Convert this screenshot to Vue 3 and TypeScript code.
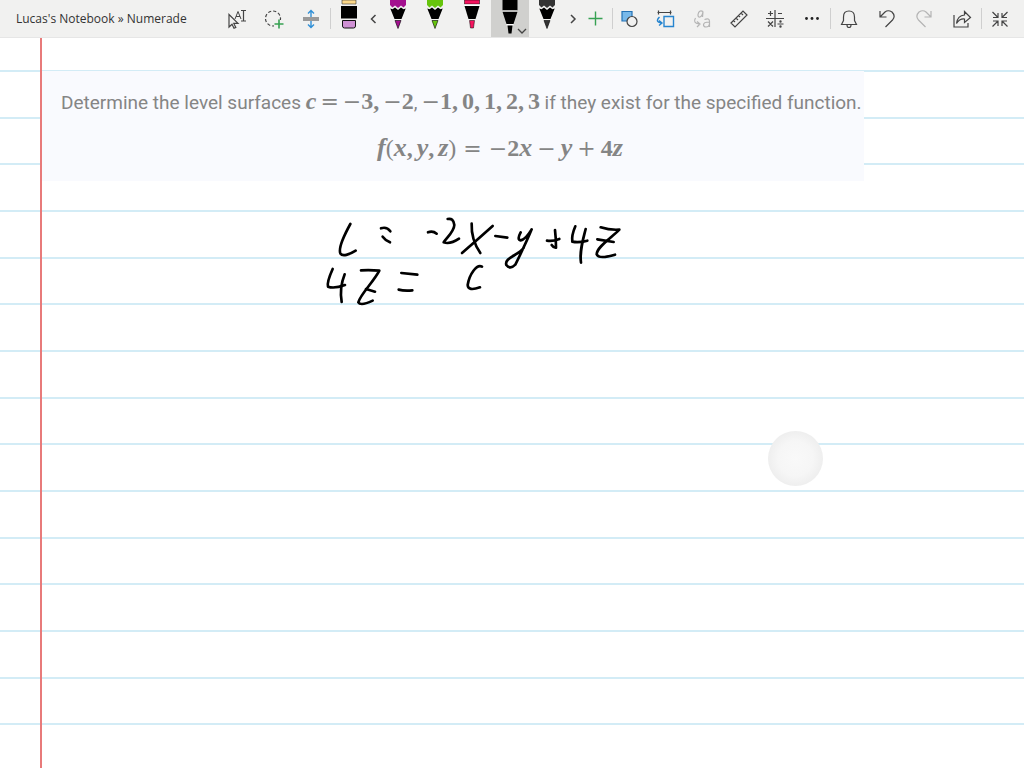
<script setup lang="ts">
interface Pen {
  name: string
  color: string
  kind: 'pencil' | 'marker'
  selected?: boolean
}

const pens: Pen[] = [
  { name: 'Purple pencil', color: '#a3108f', kind: 'pencil' },
  { name: 'Green pencil', color: '#66c40c', kind: 'pencil' },
  { name: 'Pink pen', color: '#f5145f', kind: 'marker' },
  { name: 'Black pen', color: '#000000', kind: 'marker', selected: true },
  { name: 'Dark pencil', color: '#333333', kind: 'pencil' },
]

const strokes: string[] = [
  'M121 57 C104 88 84 128 91 145 C97 156 118 149 137 137',
  'M213 70 Q230 64 241 79',
  'M218 95 Q226 106 240 112',
  'M354 82 Q368 76 380 86',
  'M413 42 Q430 38 433 60 C432 80 412 96 401 112 Q420 119 447 101',
  'M485 56 Q483 104 511 144',
  'M548 63 Q500 106 456 144',
  'M556 93 L592 98',
  'M632 82 Q620 104 632 106 Q646 104 665 73 Q650 110 616 179 Q600 195 589 180 C582 158 625 152 641 128',
  'M711 107 Q728 110 748 102',
  'M735 75 Q738 100 738 128 Q731 129 725 120',
  'M796 64 Q784 92 787 110 Q806 114 832 107',
  'M827 72 C818 108 808 140 813 173',
  'M872 67 Q900 76 928 74 C905 98 860 126 860 148 Q866 164 915 149',
  'M862 103 L911 111',
  'M516 185 C500 176 478 208 473 240 Q474 260 510 247',
  'M68 192 Q50 232 54 245 Q72 252 105 240',
  'M104 208 C92 238 90 262 95 291',
  'M153 196 Q180 194 208 197 C190 232 152 266 145 292 Q152 304 188 287',
  'M168 252 L195 260',
  'M274 204 L322 209',
  'M266 254 Q282 258 307 256',
]
</script>

<template>
  <div class="app">
    <header class="bar">
      <span class="title">Lucas's Notebook » Numerade</span>

      <div class="group edit">
        <button aria-label="Select and type">
          <svg class="icon" viewBox="0 0 20 20">
            <path d="M2 5.500V18l3-2.800 2 4 1.800-.8-2-4H11z" />
            <path d="M8 10l3-7.500 3 7.500M9 7.500h4" class="thin" />
            <path d="M14 1.500h5M14 12h5M16.500 1.500V12" />
          </svg>
        </button>
        <button aria-label="Lasso select">
          <svg class="icon" viewBox="0 0 20 20">
            <circle cx="9" cy="9.500" r="7.500" stroke-dasharray="3.200 2" stroke-dashoffset="1" pathLength="47" />
            <path d="M10 11h10v9H10z" fill="#f1f1f0" stroke="none" />
            <path d="M15 10.500v9M10.500 15h9" stroke="#36a152" stroke-width="1.600" />
          </svg>
        </button>
        <button aria-label="Insert space">
          <svg class="icon" viewBox="0 0 20 20">
            <path d="M2 9h16M2 11h16" stroke-width="1.200" />
            <path d="M10 8V1.500M7 4.500l3-3 3 3M10 12v6.500M7 15.500l3 3 3-3" stroke="#2f8fd6" stroke-width="1.400" />
          </svg>
        </button>
      </div>

      <div class="group draw">
        <button aria-label="Eraser">
          <svg class="pen" viewBox="0 0 20 37">
            <path d="M3 0h14v4H3z" fill="#fbd88a" stroke="#333" stroke-width=".6" />
            <path d="M2 6h16v12.500H2z" fill="#000" />
            <path d="M3.500 20.500h13V26q0 2-2 2h-9q-2 0-2-2z" fill="#cf91d4" stroke="#111" stroke-width="1" />
          </svg>
        </button>
        <button aria-label="Previous pens">
          <svg class="chev" viewBox="0 0 8 12"><path d="M6.500 2L2.500 6l4 4" /></svg>
        </button>
        <div class="pens">
          <button v-for="p in pens" :key="p.name" :aria-label="p.name" :class="{ selected: p.selected }">
            <svg v-if="p.kind === 'pencil'" class="pen" viewBox="0 0 20 37">
              <path d="M2 0h16v5l-2.500 2.500L13 5.500l-3 2.500-3-2.500-2.500 2L2 5z" :fill="p.color" />
              <path d="M2.300 8.500l2.200.8L7 7.500l3 2.500 3-2.500 2.500 1.800 2.200-.8-4.200 10.500h-7z" fill="#000" />
              <path d="M7 20.500h6l-3 8z" :fill="p.color" stroke="#000" stroke-width=".6" />
            </svg>
            <svg v-else-if="p.selected" class="pen" viewBox="0 0 20 37">
              <path d="M2.500 0h15v10.500h-15z" :fill="p.color" />
              <path d="M2.500 10.500h15v1.200h-15zM6.500 24h7v1.500h-7z" fill="#fff" />
              <path d="M2.500 11.700h15l-4 12.300h-7z" :fill="p.color" />
              <path d="M7.500 25.500h5l-1 8h-3z" :fill="p.color" />
            </svg>
            <svg v-else class="pen" viewBox="0 0 20 37">
              <path d="M2.500 0h15v4h-15z" :fill="p.color" stroke="#000" stroke-width=".5" />
              <path d="M2.500 4.500h15V6h-15z" fill="#fff" />
              <path d="M2.500 6h15l-4 13h-7z" fill="#000" />
              <path d="M7.500 20.500h5l-1 7.500h-3z" :fill="p.color" stroke="#000" stroke-width=".5" />
            </svg>
            <svg v-if="p.selected" class="more" viewBox="0 0 10 8"><path d="M1 2l4 4 4-4" /></svg>
          </button>
        </div>
        <button aria-label="Next pens">
          <svg class="chev" viewBox="0 0 8 12"><path d="M2 2l4 4-4 4" /></svg>
        </button>
        <button aria-label="Add pen">
          <svg class="icon" viewBox="0 0 20 20"><path d="M9.500 2.500v14M2.500 9.500h14" stroke="#36a152" stroke-width="1.400" /></svg>
        </button>
      </div>

      <div class="group tools">
        <button aria-label="Shapes">
          <svg class="icon" viewBox="0 0 20 20">
            <path d="M2 2.500h10v9.500H2z" fill="#78b9ea" stroke="#2472b5" />
            <circle cx="12" cy="12.500" r="5" fill="#f1f1f0" stroke="#444" />
          </svg>
        </button>
        <button aria-label="Ink to shape">
          <svg class="icon" viewBox="0 0 20 20">
            <path d="M1.500 3.500h14M2.500 1.500v4M14.500 1.500v4" />
            <path d="M8 7.500h9.500v10H8zM3.500 8q-5 5 2 6M3 16.500L6 14l-3-2.500" stroke="#2785cf" stroke-width="1.400" />
          </svg>
        </button>
        <button aria-label="Ink to text" disabled>
          <svg class="icon faded" viewBox="0 0 20 20">
            <path d="M10 2.500q-4-2-5 3-.2 3 2 2.500 2.500-1 3-5.500l-.5 5.500M2.500 9q-3 5 3.500 6M4 12.500l3 2.500-3 3" />
            <path d="M11.500 10.500q5-2 5 2V18M16.500 13q-6 0-6 2.800 0 2.200 2.500 2.200 3 0 3.500-3" />
          </svg>
        </button>
        <button aria-label="Ruler">
          <svg class="icon" viewBox="0 0 20 20">
            <path d="M2 14L14 2l4 4L6 18zM4.500 11.500l1.500 1.500M7 9l2 2M9.500 6.500L11 8M12 4l2 2" />
          </svg>
        </button>
        <button aria-label="Math">
          <svg class="icon" viewBox="0 0 20 20">
            <path d="M1 9.500h18M10 1v17M5.500 2v5M3 4.500h5M13 4.500h4M3 12.500l5 5M8 12.500l-5 5M12.500 15h6" />
            <circle cx="15.500" cy="12.500" r=".6" /><circle cx="15.500" cy="17.500" r=".6" />
          </svg>
        </button>
        <button aria-label="More options">
          <svg class="icon" viewBox="0 0 20 20">
            <g fill="#222" stroke="none"><circle cx="4.500" cy="9.500" r="1.400" /><circle cx="10" cy="9.500" r="1.400" /><circle cx="15.500" cy="9.500" r="1.400" /></g>
          </svg>
        </button>
      </div>

      <div class="group history">
        <button aria-label="Notifications">
          <svg class="icon" viewBox="0 0 20 20">
            <path d="M2.500 15.500l2-4V8q0-6 5.500-6t5.500 6v3.500l2 4zM8 16q0 2.500 2 2.500t2-2.500" />
          </svg>
        </button>
        <button aria-label="Undo">
          <svg class="icon" viewBox="0 0 20 20"><path d="M3 2v6h6.500M3 8l5-5q3-2.500 7 0 4 4 .5 8L8.500 18" /></svg>
        </button>
        <button aria-label="Redo" disabled>
          <svg class="icon faded" viewBox="0 0 20 20"><path d="M17 2v6h-6.500M17 8l-5-5Q9 .5 5 3q-4 4-.5 8l7 7" /></svg>
        </button>
        <button aria-label="Share">
          <svg class="icon" viewBox="0 0 20 20">
            <path d="M2 6v12h14v-4M4.500 14.500q1-8 8-8.500V2.500L18.500 8.500l-6 5V10q-5-.5-8 4.500z" />
          </svg>
        </button>
      </div>

      <div class="group full">
        <button aria-label="Exit full screen">
          <svg class="icon" viewBox="0 0 20 20">
            <path d="M2.500 3L8 8.500M8 4v4.500H3M17.500 3L12 8.500M12 4v4.500h5M2.500 17.500L8 12M3 12h5v5M17.500 17.500L12 12M17 12h-5v5" />
          </svg>
        </button>
      </div>
    </header>

    <main class="paper">
      <section class="problem">
        <p class="line">
          Determine the level surfaces
          <span class="math"><i>c</i><span class="op rel">=</span><span class="op">−</span>3<span class="comma">,</span><span class="op">−</span>2<span class="plain">,</span><span class="op">−</span>1<span class="comma">,</span>0<span class="comma">,</span>1<span class="comma">,</span>2<span class="comma">,</span>3</span>
          if they exist for the specified function.
        </p>
        <p class="line formula">
          <span class="math"><i>f</i><span class="paren">(</span><i>x</i><span class="comma">,</span><i>y</i><span class="comma">,</span><i>z</i><span class="paren">)</span><span class="op rel">=</span><span class="op">−</span>2<i>x</i><span class="op bin">−</span><i>y</i><span class="op bin">+</span>4<i>z</i></span>
        </p>
      </section>

      <svg class="ink" viewBox="0 0 960 330" role="img" aria-label="c = -2x - y + 4z, 4z = c">
        <path v-for="(d, i) in strokes" :key="i" :d="d" />
      </svg>
      <div class="spot"></div>
    </main>
  </div>
</template>

<style>
body {
  background: #fff;
}
</style>

<style scoped>
.app {
  display: flex;
  flex-direction: column;
  min-height: 100vh;
}
.bar {
  display: flex;
  box-sizing: border-box;
  height: 38px;
  padding-right: 5px;
  background: #f1f1f0;
  border-bottom: 1px solid #e6e6e6;
  position: relative;
}
.title {
  flex: 1;
  padding-left: 16px;
  font: 12px/38px "Open Sans", "Noto Sans", sans-serif;
  color: #333;
  white-space: nowrap;
}
.group {
  display: grid;
  box-sizing: border-box;
  position: relative;
}
.group + .group::before {
  content: "";
  position: absolute;
  left: 0;
  top: 8px;
  width: 1px;
  height: 21px;
  background: #cfcfcf;
}
.edit {
  width: 112px;
  grid-template-columns: repeat(3, 1fr);
}
.draw {
  width: 282px;
  grid-template-columns: 37px 12px 1fr 14px 32px;
}
.pens {
  display: grid;
  grid-template-columns: repeat(5, 1fr);
}
.tools {
  width: 218px;
  grid-template-columns: repeat(6, 1fr);
}
.history {
  width: 151px;
  grid-template-columns: repeat(4, 1fr);
}
.full {
  width: 38px;
}
button {
  display: flex;
  align-items: center;
  justify-content: center;
  position: relative;
  margin: 0;
  padding: 0;
  border: 0;
  background: none;
  min-width: 0;
}
.selected {
  background: #d0d0ce;
}
.icon {
  width: 20px;
  height: 20px;
}
.icon,
.chev,
.more {
  flex: none;
  fill: none;
  stroke: #444;
  stroke-width: 1.200;
}
.thin {
  stroke-width: 1;
}
.faded {
  stroke: #b4b4b4;
}
.chev {
  width: 8px;
  height: 12px;
  stroke-width: 1.500;
}
.pen {
  width: 20px;
  height: 37px;
  flex: none;
}
.more {
  position: absolute;
  right: 2px;
  bottom: 2px;
  width: 10px;
  height: 8px;
  stroke-width: 1.300;
}
.paper {
  flex: 1;
  position: relative;
  box-sizing: border-box;
  padding: 33px 160px 0 42px;
  background: repeating-linear-gradient(
      #d3ecf6 0 2px,
      #fff 2px 47px,
      #d3ecf6 47px 49px,
      #fff 49px 93px,
      #d3ecf6 93px 95px,
      #fff 95px 140px
    )
    0 32px no-repeat;
}
.paper::before {
  content: "";
  position: absolute;
  left: 40px;
  top: 0;
  bottom: 0;
  width: 2px;
  background: #e87a7a;
}
.problem {
  box-sizing: border-box;
  min-height: 110px;
  padding: 8px 0 8px 19px;
  background: #f9fafe;
  color: #858585;
}
.line {
  margin: 0;
  font: 19px/47px Roboto, sans-serif;
  white-space: nowrap;
}
.formula {
  padding-left: 316px;
}
.math {
  font-family: "Liberation Serif", serif;
  font-size: 24px;
  font-weight: bold;
  line-height: 24px;
}
.op {
  font: 22px/24px "DejaVu Serif", serif;
}
.rel {
  margin: 0 4px;
}
.formula .rel {
  margin: 0 7px;
}
.formula i {
  font-size: 26px;
}
.bin {
  margin: 0 5px;
}
.comma {
  margin-right: 4px;
}
.plain {
  font: 19px/24px Roboto, sans-serif;
  margin-right: 4px;
}
.paren {
  font-weight: normal;
}
.ink {
  position: absolute;
  left: 310px;
  top: 167px;
  width: 320px;
  height: 110px;
  fill: none;
  stroke: #000;
  stroke-width: 8;
  stroke-linecap: round;
  stroke-linejoin: round;
}
.spot {
  position: absolute;
  left: 768px;
  top: 393px;
  width: 55px;
  height: 55px;
  border-radius: 50%;
  background: radial-gradient(#f9f9f9, #f6f6f6 45%, #eeeeee 72%);
}
</style>
